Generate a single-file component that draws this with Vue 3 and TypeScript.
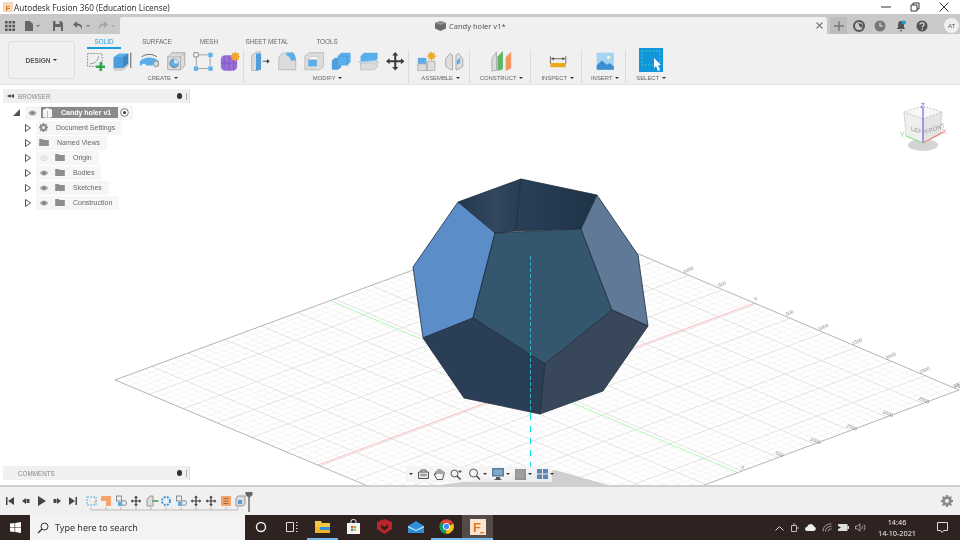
<script setup lang="ts">
type Pt = [number, number];

// corners of the ground plane as seen on screen
const L: Pt = [115, 380];
const B: Pt = [554, 218];
const R: Pt = [959, 390];
const F: Pt = [525, 552];

function at(u: number, v: number): Pt {
  const a = (1 - u) * (1 - v);
  const b = u * (1 - v);
  const c = u * v;
  const d = (1 - u) * v;
  return [a * L[0] + b * B[0] + c * R[0] + d * F[0], a * L[1] + b * B[1] + c * R[1] + d * F[1]];
}

function seg(x1: Pt, x2: Pt) {
  return { x1: x1[0], y1: x1[1], x2: x2[0], y2: x2[1] };
}

const minor: ReturnType<typeof seg>[] = [];
const major: ReturnType<typeof seg>[] = [];
for (let i = 1; i < 60; i++) {
  const t = i / 60;
  const list = i % 5 === 0 ? major : minor;
  list.push(seg(at(t, 0), at(t, 1)));
  list.push(seg(at(0, t), at(1, t)));
}
const greenAxis = seg(at(0.49, 0), at(0.49, 1));
const redAxis = seg(at(0, 0.495), at(1, 0.495));

const rightLabels = ["1000", "500", "0", "500", "1000", "1500", "2000", "2500", "3000"].map((text, i) => {
  const p = at(1, (i + 4) / 12);
  return { text, x: p[0], y: p[1] - 4, key: "r" + i };
});
const frontLabels = ["0", "-500", "-1000", "-1500", "-2000", "-2500", "-3000"].map((text, i) => {
  const p = at((i + 6) / 12, 1);
  return { text, x: p[0], y: p[1] - 2, key: "f" + i };
});

const outline = [L, B, R, F].map((p) => p.join(",")).join(" ");

const faces = [
  { key: "innerL", fill: "url(#innerL)", pts: "458,202 521,179 516,231 495,233" },
  { key: "innerR", fill: "url(#innerR)", pts: "521,179 597,195 581,229 516,231" },
  { key: "left", fill: "#5b8ec8", pts: "458,202 495,233 473,318 423,338 413,267" },
  { key: "center", fill: "#35566f", pts: "495,233 581,229 612,310 545,364 473,318" },
  { key: "right", fill: "#5f7997", pts: "597,195 638,255 648,326 612,310 581,229" },
  { key: "botL", fill: "#2a3f56", pts: "423,338 473,318 545,364 540,414 464,398" },
  { key: "botR", fill: "#39475b", pts: "545,364 612,310 648,326 603,391 540,414" },
];

const tree = [
  { name: "Document Settings", kind: "gear" },
  { name: "Named Views", kind: "plain" },
  { name: "Origin", kind: "off" },
  { name: "Bodies", kind: "on" },
  { name: "Sketches", kind: "on" },
  { name: "Construction", kind: "on" },
];
</script>

<template>
  <div class="screen">
    <svg class="defs" width="0" height="0">
      <symbol id="eye" viewBox="0 0 12 8">
        <path d="M.5 4C2 1.5 4 .6 6 .6s4 .9 5.500 3.400C10 6.500 8 7.400 6 7.400S2 6.500.5 4z" fill="#a8a8a8" />
        <circle cx="6" cy="4" r="2" fill="#7c7c7c" />
      </symbol>
      <symbol id="eyeoff" viewBox="0 0 12 8">
        <path d="M.5 4C2 1.500 4 .6 6 .6s4 .9 5.500 3.400C10 6.500 8 7.400 6 7.400S2 6.500.5 4z" fill="#f2f2f2" stroke="#c8c8c8" stroke-width=".8" />
        <circle cx="6" cy="4" r="1.700" fill="#dcdcdc" />
      </symbol>
      <symbol id="folder" viewBox="0 0 11 8">
        <path d="M0 0h4l1 1h6v7H0z" fill="#8e8e8e" />
      </symbol>
      <symbol id="move" viewBox="0 0 20 20">
        <path d="M10 1l3 3.500h-2V9h4.500V7l3.500 3-3.500 3v-2H11v4.500h2L10 19l-3-3.500h2V11H4.500v2L1 10l3.500-3v2H9V4.500H7z" fill="#3a3a3a" />
      </symbol>
      <symbol id="gear" viewBox="0 0 12 12">
        <path d="M5 0h2l.3 1.600 1.200.5L9.900 1.200l1.100 1-1 1.300.6 1.300L12 5v2l-1.400.3-.6 1.200 1 1.400-1.100 1.100-1.400-1-1.200.6L7 12H5l-.3-1.400-1.200-.6-1.400 1L1 9.900l1-1.400-.6-1.200L0 7V5l1.400-.2L2 3.500l-1-1.300 1.100-1 1.400.9 1.200-.5z" fill="#8a8a8a" />
        <circle cx="6" cy="6" r="2" fill="#f0f0f0" />
      </symbol>
    </svg>

    <header class="title-bar">
      <svg width="10" height="10" viewBox="0 0 10 10" class="app-logo">
        <rect width="10" height="10" rx="1" fill="#f6d9bd" />
        <text x="2.500" y="8.500" class="logo-f">F</text>
      </svg>
      <span class="title-text">Autodesk Fusion 360 (Education License)</span>
      <div class="win-buttons">
        <svg width="10" height="10" viewBox="0 0 10 10"><path d="M0 5h10" stroke="#333" /></svg>
        <svg width="10" height="10" viewBox="0 0 10 10" fill="none" stroke="#333"><path d="M1 3h6v6H1zM3 3V1h6v6H7" /></svg>
        <svg width="10" height="10" viewBox="0 0 10 10"><path d="M.5.500l9 9M9.500.500l-9 9" stroke="#333" /></svg>
      </div>
    </header>

    <div class="tab-bar">
      <div class="quick">
        <svg width="10" height="10" viewBox="0 0 10 10" fill="#555" class="q-grid">
          <path d="M0 0h2.600v2.600H0zM3.700 0h2.600v2.600H3.700zM7.400 0H10v2.600H7.400zM0 3.700h2.600v2.600H0zM3.700 3.700h2.600v2.600H3.700zM7.400 3.700H10v2.600H7.400zM0 7.400h2.600V10H0zM3.700 7.400h2.600V10H3.700zM7.400 7.400H10V10H7.400z" />
        </svg>
        <svg width="8" height="10" viewBox="0 0 8 10" class="q-file"><path d="M0 0h5l3 3v7H0z" fill="#666" /></svg>
        <span class="caret q-caret"></span>
        <svg width="10" height="10" viewBox="0 0 10 10" class="q-save">
          <path d="M0 0h8l2 2v8H0z" fill="#666" /><path d="M2.500 0h4v3h-4zM2 6h6v4H2z" fill="#c9c9c9" />
        </svg>
        <svg width="10" height="9" viewBox="0 0 10 9" class="q-undo">
          <path d="M4 0L0 3.500 4 7V4.500c3 0 4 1.500 4.500 4C10 5 8 2.500 4 2.500z" fill="#666" />
        </svg>
        <span class="caret q-caret"></span>
        <svg width="10" height="9" viewBox="0 0 10 9" class="q-redo">
          <path d="M6 0l4 3.500L6 7V4.500c-3 0-4 1.500-4.500 4C0 5 2 2.500 6 2.500z" fill="#a5a5a5" />
        </svg>
        <span class="caret q-caret light"></span>
      </div>
      <div class="doc-tab">
        <svg width="11" height="10" viewBox="0 0 11 10" class="doc-icon">
          <path d="M0 2l5.500-2L11 2v5.500L5.500 10 0 7.500z" fill="#6c6c6c" /><path d="M0 2l5.500 2L11 2 5.500 0z" fill="#909090" />
        </svg>
        <span class="doc-name">Candy holer v1*</span>
        <svg width="7" height="7" viewBox="0 0 7 7" class="doc-close"><path d="M.5.500l6 6M6.500.500l-6 6" stroke="#777" stroke-width="1.100" /></svg>
      </div>
      <div class="add-tab">
        <svg width="10" height="10" viewBox="0 0 10 10"><path d="M5 0v10M0 5h10" stroke="#777" stroke-width="1.400" /></svg>
      </div>
      <div class="status-icons">
        <svg width="12" height="12" viewBox="0 0 12 12">
          <circle cx="6" cy="6" r="5" fill="none" stroke="#555" stroke-width="2" /><path d="M5 3l4 1 1 4-3-1z" fill="#555" />
        </svg>
        <svg width="12" height="12" viewBox="0 0 12 12">
          <circle cx="6" cy="6" r="5.500" fill="#777" /><path d="M6 2.500V6h3" fill="none" stroke="#ddd" stroke-width="1.100" />
        </svg>
        <svg width="12" height="12" viewBox="0 0 12 12">
          <path d="M6 1c2 0 3 1.500 3 4v2.500l1.500 1.500h-9L3 7.500V5c0-2.500 1-4 3-4zM4.800 10h2.400L6 12z" fill="#555" />
          <circle cx="9" cy="2.500" r="2" fill="#1b9be0" />
        </svg>
        <svg width="12" height="12" viewBox="0 0 12 12">
          <circle cx="6" cy="6" r="5.500" fill="#555" />
          <path d="M4 4.500C4 3.300 5 2.800 6 2.800s2 .6 2 1.700C8 6 6.300 6 6.300 7.500" fill="none" stroke="#ddd" stroke-width="1.200" />
          <circle cx="6.300" cy="9.300" r=".8" fill="#ddd" />
        </svg>
        <span class="avatar">AT</span>
      </div>
    </div>

    <section class="ribbon">
      <div class="design-btn">DESIGN <span class="caret dark"></span></div>
      <div class="ribbon-main">
        <nav class="tabs">
          <span class="tab active">SOLID</span>
          <span class="tab surface">SURFACE</span>
          <span class="tab">MESH</span>
          <span class="tab">SHEET METAL</span>
          <span class="tab">TOOLS</span>
        </nav>
        <div class="groups">
          <div class="group g-create">
            <div class="icons">
              <svg class="ri" viewBox="0 0 24 24">
                <path d="M3 3h17v15H3z" fill="none" stroke="#555" stroke-dasharray="2 1.500" stroke-width=".8" />
                <path d="M6 15c6 0 9-4 10-9" fill="none" stroke="#888" />
                <path d="M17 13h3v4h4v3h-4v4h-3v-4h-4v-3h4z" fill="#2aa84a" />
              </svg>
              <svg class="ri" viewBox="0 0 24 24">
                <path d="M2 7l6-4h11v13l-6 5H2z" fill="#5aaeea" /><path d="M2 7h11v14H2z" fill="#4f9ddb" /><path d="M13 7l6-4v13l-6 5z" fill="#3d86c4" />
                <path d="M2 20h11l6-5v3l-6 5H2z" fill="#cfcfcf" /><path d="M22 2v18" stroke="#444" />
              </svg>
              <svg class="ri" viewBox="0 0 24 24">
                <path d="M1 12C5 6 19 6 23 12v6c-3-4-7-4-7-1H8c0-3-4-3-7 1z" fill="#5aaeea" />
                <path d="M3 7c5-4 13-4 18 0" fill="none" stroke="#555" /><ellipse cx="20" cy="15" rx="3" ry="3.500" fill="#d8d8d8" stroke="#888" />
              </svg>
              <svg class="ri" viewBox="0 0 24 24">
                <path d="M2 7l5-5h15v15l-5 5H2z" fill="#dcdcdc" stroke="#888" stroke-width=".7" /><path d="M2 7h15v15M17 7l5-5" fill="none" stroke="#999" stroke-width=".7" />
                <circle cx="9.500" cy="14.500" r="5" fill="#5aaeea" stroke="#777" /><path d="M9.500 9.500a5 5 0 0 1 5 5h-5z" fill="#cfe3f3" />
              </svg>
              <svg class="ri" viewBox="0 0 24 24">
                <path d="M6 4.500h12M4 7v11M20 7v11M6 20.500h12" stroke="#999" />
                <path d="M1 2h5v5H1z" fill="#fff" stroke="#777" /><path d="M18 2h5v5h-5zM1 18h5v5H1zM18 18h5v5h-5z" fill="#5aaeea" />
              </svg>
              <svg class="ri" viewBox="0 0 24 24">
                <rect x="1" y="5" width="19" height="18" rx="5" fill="#9a6fd8" />
                <path d="M1 14h19M10.500 5v18M5 6v16M16 6v16" stroke="#7a4fc0" stroke-width=".7" />
                <path d="M18 0l1.400 3 3-1-1 3 2.600 1.500L21.400 8l1 3-3-1L18 12.500 16.600 10l-3 1 1-3L12 6.500 14.600 5l-1-3 3 1z" fill="#f5a623" />
              </svg>
            </div>
            <span class="g-label">CREATE <i class="caret dark"></i></span>
          </div>
          <div class="group g-modify">
            <div class="icons">
              <svg class="ri" viewBox="0 0 24 24">
                <path d="M2 5l6-4h4v20l-4 2H2z" fill="#dcdcdc" stroke="#888" stroke-width=".6" /><path d="M7 3h6v19l-6 1z" fill="#4f9ddb" />
                <path d="M15 12h6" stroke="#333" /><path d="M20 9.500l3 2.500-3 2.500z" fill="#333" />
              </svg>
              <svg class="ri" viewBox="0 0 24 24">
                <path d="M2 9Q3 2 12 2h7l3 8v12H2z" fill="#dcdcdc" stroke="#999" stroke-width=".6" /><path d="M11 2h8q3 3 3 9h-6q0-4-5-6z" fill="#5aaeea" />
              </svg>
              <svg class="ri" viewBox="0 0 24 24">
                <path d="M1 6l5-4h17v16l-5 4H1z" fill="#dcdcdc" stroke="#999" stroke-width=".6" /><path d="M5 10h10v8H5z" fill="#5aaeea" /><path d="M5 10l3-3h10l-3 3z" fill="#fff" stroke="#999" stroke-width=".4" />
              </svg>
              <svg class="ri" viewBox="0 0 24 24">
                <path d="M1 11l4-3h7v11l-4 3H1z" fill="#4f9ddb" /><path d="M8 6l4-4h11v11l-4 4H8z" fill="#5aaeea" /><path d="M8 6h11v11" fill="none" stroke="#3d86c4" stroke-width=".6" />
              </svg>
              <svg class="ri" viewBox="0 0 24 24">
                <path d="M3 6l4-4h16v7l-4 3H3z" fill="#5aaeea" />
                <path d="M1 13l21-2" stroke="#8ec9f0" stroke-width="1.400" />
                <path d="M3 14h16l4-3v7l-4 4H3z" fill="#dcdcdc" stroke="#999" stroke-width=".5" />
              </svg>
              <svg class="ri" viewBox="0 0 20 20"><use href="#move" /></svg>
            </div>
            <span class="g-label">MODIFY <i class="caret dark"></i></span>
          </div>
          <div class="group g-assemble">
            <div class="icons wide">
              <svg class="ri" viewBox="0 0 24 24">
                <path d="M1 8h10v7H1z" fill="#5aaeea" /><path d="M1 15h10v8H1zM12 12h9v11h-9z" fill="#dcdcdc" stroke="#888" stroke-width=".6" />
                <path d="M17 0l1.200 2.700 2.800-1-1 2.800 3 1.500-3 1.400 1 2.800-2.800-1L17 12l-1.300-2.800-2.700 1 1-2.800-3-1.400 3-1.500-1-2.800 2.700 1z" fill="#f5a623" />
              </svg>
              <svg class="ri" viewBox="0 0 24 24">
                <path d="M2 9l5-6 3 2v17l-4-1-4-3z" fill="#dedede" stroke="#888" stroke-width=".7" />
                <path d="M22 9l-5-6-3 2v17l4-1 4-3z" fill="#dedede" stroke="#888" stroke-width=".7" />
                <path d="M15 11l4-3v6l-4 2z" fill="#5aaeea" />
              </svg>
            </div>
            <span class="g-label">ASSEMBLE <i class="caret dark"></i></span>
          </div>
          <div class="group g-construct">
            <div class="icons">
              <svg class="ri big" viewBox="0 0 24 24">
                <path d="M1 9l5-7v20l-5 1z" fill="#dcdcdc" stroke="#888" stroke-width=".6" />
                <path d="M7 7l6-6v20l-6 2z" fill="#5cb868" />
                <path d="M16 8l6-6v18l-6 3z" fill="#ef9860" />
              </svg>
            </div>
            <span class="g-label">CONSTRUCT <i class="caret dark"></i></span>
          </div>
          <div class="group g-inspect">
            <div class="icons">
              <svg class="ri" viewBox="0 0 24 24">
                <path d="M4 6v9M22 6v9" stroke="#555" /><path d="M5 9h16" stroke="#555" /><path d="M5 9l3-2v4zM21 9l-3-2v4z" fill="#555" />
                <path d="M4 14h18v5H4z" fill="#eda91c" />
              </svg>
            </div>
            <span class="g-label">INSPECT <i class="caret dark"></i></span>
          </div>
          <div class="group g-insert">
            <div class="icons">
              <svg class="ri" viewBox="0 0 24 24">
                <rect x="2" y="2" width="20" height="20" fill="#a8d4f2" />
                <circle cx="16" cy="7.500" r="2" fill="#fff5c9" />
                <path d="M2 17l6-6 6 5 3-2 5 4v4H2z" fill="#3d8ed0" />
              </svg>
            </div>
            <span class="g-label">INSERT <i class="caret dark"></i></span>
          </div>
          <div class="group g-select">
            <div class="select-btn">
              <svg width="24" height="24" viewBox="0 0 24 24">
                <path d="M3 3h18v14H3z" fill="none" stroke="#5ed2a8" stroke-width=".8" stroke-dasharray="2 1.500" />
                <path d="M15 10l7 7h-3l2 5-2 1-2-5-2 2z" fill="#fff" />
              </svg>
            </div>
            <span class="g-label">SELECT <i class="caret dark"></i></span>
          </div>
        </div>
      </div>
    </section>

    <main class="viewport">
      <svg class="canvas" width="960" height="400" viewBox="0 85 960 400">
        <defs>
          <linearGradient id="innerL" x1="0" y1="0" x2="1" y2="0">
            <stop offset="0" stop-color="#22384c" /><stop offset=".6" stop-color="#33475f" /><stop offset="1" stop-color="#283c52" />
          </linearGradient>
          <linearGradient id="innerR" x1="0" y1="0" x2="1" y2="0">
            <stop offset="0" stop-color="#2a4058" /><stop offset="1" stop-color="#1f3346" />
          </linearGradient>
        </defs>
        <line v-for="(l, i) in minor" :key="'n' + i" v-bind="l" class="g-minor" />
        <line v-for="(l, i) in major" :key="'m' + i" v-bind="l" class="g-major" />
        <line v-bind="greenAxis" class="g-green" />
        <line v-bind="redAxis" class="g-red" />
        <polygon :points="outline" class="g-border" />
        <text
          v-for="t in rightLabels"
          :key="t.key"
          :x="t.x"
          :y="t.y"
          :transform="`rotate(-24 ${t.x} ${t.y})`"
          class="g-label-text"
        >{{ t.text }}</text>
        <text
          v-for="t in frontLabels"
          :key="t.key"
          :x="t.x"
          :y="t.y"
          :transform="`rotate(22 ${t.x} ${t.y})`"
          class="g-label-text"
        >{{ t.text }}</text>
        <polygon points="440,485 555,470 608,485" fill="#cfcfcf" />
        <polygon v-for="f in faces" :key="f.key" :points="f.pts" :fill="f.fill" class="face" />
        <line x1="530.500" y1="256" x2="530.500" y2="414" class="axis-on" />
        <line x1="530.500" y1="414" x2="530.500" y2="485" class="axis-off" />
      </svg>

      <svg class="viewcube" width="60" height="60" viewBox="0 0 60 60">
        <ellipse cx="28" cy="46" rx="15" ry="6" fill="#d4d4d4" />
        <path d="M9 13l19 7v24L11 37z" fill="#efefef" />
        <path d="M47 13l-19 7v24l17-7z" fill="#e4e4e4" />
        <path d="M28 7l19 6-19 7-19-7z" fill="#f8f8f8" stroke="#aaa" stroke-width=".7" stroke-dasharray="2 1.500" />
        <path d="M9 13l2 24M47 13l-2 24" stroke="#c8c8c8" stroke-width=".7" fill="none" />
        <text x="12" y="21" transform="matrix(1 .3 0 1 4 7)" class="cube-text">LEFT</text>
        <text x="31" y="35" transform="rotate(-20 31 35)" class="cube-text">FRONT</text>
        <path d="M28 44V9" stroke="#5a5ae6" stroke-width="1.100" />
        <path d="M28 44l-17-7" stroke="#8fdc8f" stroke-width="1.100" />
        <path d="M28 44l20-11" stroke="#ea7f7f" stroke-width="1.100" />
        <text x="25.500" y="9" class="axis-z">Z</text>
        <text x="5" y="38" class="axis-y">Y</text>
        <text x="47" y="35" class="axis-x">X</text>
      </svg>

      <aside class="panel browser">
        <div class="panel-head">
          <svg width="7" height="4" viewBox="0 0 7 4" class="collapse"><path d="M3.500 0v4L0 2zM7 0v4L3.500 2z" fill="#444" /></svg>
          <span class="panel-title">BROWSER</span>
          <span class="panel-dot"></span>
          <span class="panel-grip"></span>
        </div>
        <div class="tree">
          <div class="root-row">
            <svg width="7" height="7" viewBox="0 0 7 7" class="root-arrow"><path d="M7 0v7H0z" fill="#555" /></svg>
            <div class="chip root-chip">
              <svg width="9" height="6" class="eye"><use href="#eye" /></svg>
              <div class="root-name">
                <svg width="9" height="10" viewBox="0 0 9 10"><path d="M0 2l4-2 5 1.500V9L4.500 10 0 9z" fill="#f6f6f6" /><path d="M4.500 3v7" stroke="#bbb" /></svg>
                <span>Candy holer v1</span>
              </div>
              <svg width="9" height="9" viewBox="0 0 9 9" class="radio">
                <circle cx="4.500" cy="4.500" r="3.800" fill="#fff" stroke="#555" stroke-width=".8" /><circle cx="4.500" cy="4.500" r="1.500" fill="#333" />
              </svg>
            </div>
          </div>
          <div v-for="row in tree" :key="row.name" class="tree-row">
            <svg width="6" height="8" viewBox="0 0 6 8" class="expand"><path d="M.5.500L5.500 4 .5 7.500z" fill="#fff" stroke="#555" /></svg>
            <div class="chip">
              <svg v-if="row.kind === 'gear'" width="9" height="9" class="t-icon"><use href="#gear" /></svg>
              <svg v-else-if="row.kind === 'plain'" width="10" height="7" class="t-icon"><use href="#folder" /></svg>
              <template v-else>
                <svg width="10" height="6" class="t-icon t-eye"><use :href="row.kind === 'off' ? '#eyeoff' : '#eye'" /></svg>
                <svg width="10" height="7" class="t-folder"><use href="#folder" /></svg>
              </template>
              <span class="t-name" :class="{ 'with-eye': row.kind === 'off' || row.kind === 'on' }">{{ row.name }}</span>
            </div>
          </div>
        </div>
      </aside>

      <aside class="panel comments">
        <div class="panel-head">
          <span class="panel-title indent">COMMENTS</span>
          <span class="panel-dot"></span>
          <span class="panel-grip"></span>
        </div>
      </aside>

      <div class="nav-bar">
        <svg width="12" height="12" viewBox="0 0 20 20"><use href="#move" /></svg>
        <span class="caret dark"></span>
        <svg width="11" height="10" viewBox="0 0 11 10" class="nb">
          <path d="M.5 3h10v6.500H.5z" fill="#ddd" stroke="#555" /><path d="M3 3V1h5v2M2.500 6h6" stroke="#555" fill="none" />
        </svg>
        <svg width="11" height="12" viewBox="0 0 11 12" class="nb">
          <path d="M2 6V3.500M4 5.500V1.500M6 5.500V1.500M8 6V2.500M2 6L1 5 .5 7l2.500 4.500h5.500L10 6V4" fill="none" stroke="#555" stroke-linecap="round" />
        </svg>
        <svg width="12" height="11" viewBox="0 0 12 11" class="nb">
          <circle cx="4.500" cy="4.500" r="3.500" fill="#eef4f8" stroke="#555" /><path d="M7 7l3.500 3.500" stroke="#444" stroke-width="1.400" /><path d="M10 1v3M8.500 2.500h3" stroke="#555" />
        </svg>
        <svg width="13" height="12" viewBox="0 0 13 12" class="nb wide-nb">
          <circle cx="5.500" cy="5" r="4" fill="#eef4f8" stroke="#555" /><path d="M8.500 8l3.500 3.500" stroke="#444" stroke-width="1.400" />
        </svg>
        <span class="caret dark"></span>
        <svg width="12" height="12" viewBox="0 0 12 12" class="nb">
          <path d="M0 0h12v8.500H0z" fill="#5a7e9e" /><path d="M1.500 1.500h9v5.500h-9z" fill="#7fa8cc" /><path d="M4 9h4v2H4z" fill="#555" /><path d="M2.500 11h7v1h-7z" fill="#555" />
        </svg>
        <span class="caret dark"></span>
        <svg width="11" height="11" viewBox="0 0 11 11" class="nb">
          <path d="M0 0h11v11H0z" fill="#8a8a8a" /><path d="M2 0v11M4 0v11M6 0v11M8 0v11M0 2h11M0 4h11M0 6h11M0 8h11" stroke="#bbb" stroke-width=".5" />
        </svg>
        <span class="caret dark"></span>
        <svg width="11" height="10" viewBox="0 0 11 10" class="nb">
          <path d="M0 0h11v10H0z" fill="#5f87b5" /><path d="M5.500 0v10M0 5h11" stroke="#e8e8e8" />
        </svg>
        <span class="caret dark"></span>
      </div>
    </main>

    <section class="timeline">
      <div class="controls">
        <svg width="10" height="10" viewBox="0 0 10 10"><path d="M1 1h1.500v8H1zM9 1v8L3 5z" fill="#444" /></svg>
        <svg width="10" height="10" viewBox="0 0 10 10"><path d="M5 2v6L1 5zM5.500 3h3v4h-3z" fill="#444" /></svg>
        <svg width="10" height="10" viewBox="0 0 10 10"><path d="M2 0l8 5-8 5z" fill="#444" /></svg>
        <svg width="10" height="10" viewBox="0 0 10 10"><path d="M5 2v6l4-3zM4.500 3h-3v4h3z" fill="#444" /></svg>
        <svg width="10" height="10" viewBox="0 0 10 10"><path d="M9 1H7.500v8H9zM1 1v8l6-4z" fill="#444" /></svg>
      </div>
      <svg class="strip" width="172" height="26" viewBox="88 488 172 26">
        <path d="M96 506v3h147v-3M111 506v3M126 506v3M141 506v3M156 506v3M171 506v3M186 506v3M201 506v3M216 506v3M231 506v3" fill="none" stroke="#bbb" />
        <path d="M92 496h9v8h-9z" fill="none" stroke="#5aaeea" stroke-dasharray="2 1" />
        <path d="M99 502l3-3" stroke="#ef9860" />
        <path d="M106 495h10v10h-5v-5h-5z" fill="#f5a56b" />
        <g fill="#e8eef4" stroke="#777" stroke-width=".8">
          <rect x="121.500" y="495" width="5" height="5" /><circle cx="129" cy="502" r="2.500" />
          <rect x="181.500" y="495" width="5" height="5" /><circle cx="189" cy="502" r="2.500" />
        </g>
        <rect x="123" y="501" width="4" height="4" fill="#5aaeea" /><rect x="183" y="501" width="4" height="4" fill="#5aaeea" />
        <use href="#move" x="135" y="494" width="12" height="12" />
        <use href="#move" x="195" y="494" width="12" height="12" />
        <use href="#move" x="210" y="494" width="12" height="12" />
        <path d="M152 498l3-3h3v10h-6zM159 500h5" fill="#dcdcdc" stroke="#777" stroke-width=".7" />
        <path d="M157 500h6" stroke="#2aa84a" stroke-width="1.200" />
        <circle cx="171" cy="500" r="4" fill="none" stroke="#3d9be0" stroke-width="2" stroke-dasharray="2 1.200" />
        <path d="M226 495h10v10h-10z" fill="#f5a56b" /><path d="M228.500 497.500h5M228.500 500h5M228.500 502.500h5" stroke="#a86a3a" />
        <path d="M241 497l2-2h7v8l-2 2h-7z" fill="#dcdcdc" stroke="#777" stroke-width=".7" /><path d="M243 499h4v4h-4z" fill="#4f9ddb" />
        <path d="M250.500 491h7v3l-3.500 3-3.500-3z" fill="#666" /><path d="M254 495v16" stroke="#777" stroke-width="1.600" />
      </svg>
      <svg width="12" height="12" class="t-gear"><use href="#gear" /></svg>
    </section>

    <footer class="taskbar">
      <div class="start">
        <svg width="11" height="11" viewBox="0 0 11 11" fill="#fff">
          <path d="M0 1.600L4.600 1v4.200H0zM5.200.9L11 0v5.200H5.200zM0 5.800h4.600V10L0 9.400zM5.200 5.800H11V11l-5.800-.9z" />
        </svg>
      </div>
      <div class="search">
        <svg width="12" height="12" viewBox="0 0 12 12" fill="none" stroke="#333">
          <circle cx="7.500" cy="4.500" r="3.500" /><path d="M5 7l-4 4" stroke-width="1.200" />
        </svg>
        <span>Type here to search</span>
      </div>
      <div class="task-btn">
        <svg width="12" height="12" viewBox="0 0 12 12"><circle cx="6" cy="6" r="4.500" fill="none" stroke="#eee" stroke-width="1.400" /></svg>
      </div>
      <div class="task-btn">
        <svg width="12" height="10" viewBox="0 0 12 10" fill="none" stroke="#ddd"><path d="M.5.500h7v9h-7zM10 .5h1.500M10 3.500h1.500M10 6.500h1.500M10 9.500h1.500" /></svg>
      </div>
      <div class="task-btn running">
        <svg width="15" height="13" viewBox="0 0 15 13"><path d="M0 1h6l1 2h8v10H0z" fill="#f5c644" /><path d="M0 7h15v6H0z" fill="#f0b429" /><path d="M5 7h10v3H5z" fill="#2f8fd8" /></svg>
      </div>
      <div class="task-btn">
        <svg width="15" height="15" viewBox="0 0 15 15">
          <path d="M1 4h13v11H1z" fill="#f4f4f4" /><path d="M5 4V2q0-1.500 2.500-1.500T10 2v2" fill="none" stroke="#eee" />
          <path d="M5 7h2.300v2.300H5z" fill="#e8562a" /><path d="M7.800 7h2.300v2.300H7.800z" fill="#7db93d" /><path d="M5 9.800h2.300v2.300H5z" fill="#2c9be0" /><path d="M7.800 9.800h2.300v2.300H7.800z" fill="#f5b71f" />
        </svg>
      </div>
      <div class="task-btn">
        <svg width="15" height="15" viewBox="0 0 15 15"><path d="M7.500 0L15 3v7l-7.500 5L0 10V3zM4 5.500V9l3.500 2.500L11 9V5.500L7.500 8z" fill="#b8262b" fill-rule="evenodd" /></svg>
      </div>
      <div class="task-btn">
        <svg width="16" height="12" viewBox="0 0 16 12"><path d="M0 5l8-5 8 5v7H0z" fill="#2a8fdc" /><path d="M0 5l8 4 8-4v1.200L8 10 0 6.200z" fill="#e8f4fc" /></svg>
      </div>
      <div class="task-btn running">
        <svg width="15" height="15" viewBox="0 0 15 15">
          <path d="M7.500 7.500L1.200 4A7.300 7.300 0 0 1 14.400 4.800H7.500z" fill="#db4437" />
          <path d="M7.500 7.500L1.200 4A7.300 7.300 0 0 0 7 14.800z" fill="#0f9d58" />
          <path d="M7.500 7.500L7 14.800A7.300 7.300 0 0 0 14.400 4.800z" fill="#f4c20d" />
          <circle cx="7.500" cy="7.500" r="3.600" fill="#fff" /><circle cx="7.500" cy="7.500" r="2.700" fill="#4285f4" />
        </svg>
      </div>
      <div class="task-btn running active">
        <svg width="16" height="16" viewBox="0 0 16 16">
          <rect width="16" height="16" fill="#fbe4cd" /><text x="3" y="13" class="task-f">F</text><path d="M10 13h4v1.500h-4z" fill="#e8833a" />
        </svg>
      </div>
      <div class="tray">
        <svg width="9" height="6" viewBox="0 0 9 6" fill="none" stroke="#ddd"><path d="M.5 5.500l4-4 4 4" /></svg>
        <svg width="9" height="10" viewBox="0 0 9 10" fill="none" stroke="#bbb"><path d="M1.500 2.500h5v6h-5zM3 1h2M6.500 5H9" /></svg>
        <svg width="11" height="7" viewBox="0 0 11 7"><path d="M2 7a2 2 0 0 1 0-4q1-3 4-3 2.500 0 3 2.500A2.300 2.300 0 0 1 9 7z" fill="#eee" /></svg>
        <svg width="10" height="9" viewBox="0 0 10 9" fill="none" stroke="#aaa" stroke-width=".9"><path d="M1 8.500Q1 1 9.500.8M3.500 8.500q0-5 6-5.200M6 8.500Q6 6 9.500 5.800" /></svg>
        <svg width="11" height="7" viewBox="0 0 11 7"><path d="M0 0h9.500v7H0z" fill="#ddd" /><path d="M9.500 2H11v3H9.500z" fill="#ddd" /><path d="M0 2l3 1.500L0 5z" fill="#2e2320" /></svg>
        <svg width="11" height="9" viewBox="0 0 11 9" fill="none" stroke="#bbb" stroke-width=".8"><path d="M.5 3h2L5 .8v7.400L2.500 6h-2zM7 3q1 1.500 0 3M9 1.500q2 3 0 6" /></svg>
      </div>
      <div class="clock"><span>14:46</span><span>14-10-2021</span></div>
      <div class="notify">
        <svg width="11" height="11" viewBox="0 0 11 11" fill="none" stroke="#ddd"><path d="M.5.500h10v8H6.500L5 10.500 3.500 8.500h-3z" /></svg>
      </div>
    </footer>
  </div>
</template>

<style>
html,
body {
  margin: 0;
  background: #fff;
}
</style>

<style scoped>
.screen {
  width: 960px;
  height: 540px;
  display: flex;
  flex-direction: column;
  overflow: hidden;
  position: relative;
  background: #fff;
  color: #555;
  font-family: "Liberation Sans", Arial, sans-serif;
  filter: blur(0.35px);
}
.defs {
  position: absolute;
}
.caret {
  display: inline-block;
  width: 0;
  height: 0;
  border-left: 2px solid transparent;
  border-right: 2px solid transparent;
  border-top: 2.500px solid #777;
  vertical-align: middle;
}
.caret.dark {
  border-top-color: #333;
}
.caret.light {
  border-top-color: #aaa;
}

.title-bar {
  height: 14px;
  flex: none;
  display: flex;
  align-items: center;
  padding-left: 3px;
}
.app-logo {
  flex: none;
}
.logo-f {
  font: bold 8px "Liberation Sans", sans-serif;
  fill: #e07a1f;
}
.title-text {
  margin-left: 1px;
  font: 8.200px "Noto Sans", sans-serif;
  color: #333;
}
.win-buttons {
  margin-left: auto;
  display: flex;
  gap: 19px;
  padding-right: 11px;
}

.tab-bar {
  height: 20px;
  flex: none;
  background: #c9c9c9;
  display: flex;
  align-items: flex-end;
}
.quick {
  width: 120px;
  height: 17px;
  flex: none;
  display: flex;
  align-items: center;
  padding-left: 5px;
  box-sizing: border-box;
}
.q-file {
  margin-left: 10px;
}
.q-caret {
  margin-left: 3px;
}
.q-save {
  margin-left: 13px;
}
.q-undo {
  margin-left: 10px;
}
.q-redo {
  margin-left: 8px;
}
.doc-tab {
  width: 707px;
  height: 17px;
  flex: none;
  box-sizing: border-box;
  background: #f0f0f0;
  border-radius: 3px 3px 0 0;
  display: flex;
  align-items: center;
  padding-left: 315px;
  font: 7.500px "Noto Sans", sans-serif;
  color: #555;
}
.doc-name {
  margin-left: 3px;
}
.doc-close {
  margin-left: auto;
  margin-right: 4px;
}
.add-tab {
  margin-left: 3px;
  width: 17px;
  height: 17px;
  flex: none;
  background: #bcbcbc;
  display: flex;
  align-items: center;
  justify-content: center;
}
.status-icons {
  height: 17px;
  display: flex;
  align-items: center;
  gap: 9px;
  padding-left: 6px;
}
.avatar {
  margin-left: 7px;
  width: 15px;
  height: 15px;
  border-radius: 50%;
  background: #f0f0f0;
  font: 6px "Liberation Sans", sans-serif;
  color: #555;
  display: flex;
  align-items: center;
  justify-content: center;
}

.ribbon {
  height: 51px;
  flex: none;
  box-sizing: border-box;
  background: #f0f0f0;
  border-bottom: 1px solid #e2e2e2;
  display: flex;
}
.design-btn {
  width: 67px;
  height: 38px;
  margin: 7px 7px 0 8px;
  flex: none;
  box-sizing: border-box;
  border: 1px solid #dedede;
  border-radius: 3px;
  display: flex;
  align-items: center;
  justify-content: center;
  gap: 3px;
  font-size: 6.500px;
  font-weight: bold;
  color: #555;
}
.ribbon-main {
  flex: 1;
  display: flex;
  flex-direction: column;
}
.tabs {
  height: 15px;
  flex: none;
  display: grid;
  grid-template-columns: 34px 62px 52px 64px 56px;
  margin-left: 5px;
  box-sizing: border-box;
  padding-top: 3px;
}
.tab {
  font-size: 6.300px;
  line-height: 9px;
  text-align: center;
  color: #666;
}
.tab.active {
  color: #1b9be0;
  height: 12px;
  border-bottom: 2px solid #1b9be0;
  box-sizing: border-box;
}
.tab.surface {
  padding-left: 10px;
}
.groups {
  display: flex;
  height: 34px;
  padding-top: 1px;
  box-sizing: border-box;
}
.group {
  flex: none;
  display: flex;
  flex-direction: column;
  align-items: center;
  justify-content: space-between;
  box-sizing: border-box;
  border-right: 1px solid #dcdcdc;
  height: 33px;
  margin-right: 3px;
}
.g-create { width: 162px; }
.g-modify { width: 162px; }
.g-assemble { width: 58px; }
.g-construct { width: 58px; }
.g-inspect { width: 48px; }
.g-insert { width: 41px; }
.g-select { width: 44px; border-right: 0; }
.icons {
  display: flex;
  gap: 6.500px;
  height: 22px;
  align-items: center;
}
.icons.wide {
  gap: 7px;
}
.ri {
  width: 20.500px;
  height: 20.500px;
  flex: none;
}
.ri.big {
  width: 22px;
  height: 22px;
}
.g-label {
  font-size: 5.900px;
  line-height: 8px;
  color: #666;
  white-space: nowrap;
  padding-bottom: 1px;
}
.g-label .caret {
  margin-left: 1px;
}
.select-btn {
  width: 24px;
  height: 24px;
  margin-top: -2px;
  background: #0f96dc;
}

.viewport {
  flex: 1;
  position: relative;
  background: #fff;
  overflow: hidden;
}
.canvas {
  position: absolute;
  left: 0;
  top: 0;
}
.g-minor {
  stroke: #f1f1f1;
  stroke-width: 0.7;
}
.g-major {
  stroke: #dcdcdc;
  stroke-width: 0.8;
}
.g-green {
  stroke: #b6f4b6;
}
.g-red {
  stroke: #ffbcbc;
}
.g-border {
  fill: none;
  stroke: #b4b4b4;
}
.g-label-text {
  font-size: 4.800px;
  fill: #8a8a8a;
  text-anchor: middle;
}
.face {
  stroke: #1f2d3c;
  stroke-width: 0.8;
  stroke-linejoin: round;
}
.axis-on {
  stroke: #2cb3c4;
  stroke-dasharray: 4 2;
}
.axis-off {
  stroke: #00e6e6;
  stroke-dasharray: 6 6;
}
.viewcube {
  position: absolute;
  left: 895px;
  top: 14px;
}
.cube-text {
  font-size: 6px;
  fill: #999;
}
.axis-z {
  font-size: 7px;
  fill: #5a5ae6;
}
.axis-y {
  font-size: 7px;
  fill: #8fdc8f;
}
.axis-x {
  font-size: 7px;
  fill: #ea7f7f;
}

.panel {
  position: absolute;
  left: 3px;
  width: 187px;
}
.browser {
  top: 4px;
}
.comments {
  top: 381px;
}
.panel-head {
  height: 14px;
  background: #f0f0f0;
  display: flex;
  align-items: center;
  box-sizing: border-box;
  border-right: 1px solid #ddd;
  padding-left: 4px;
}
.collapse {
  margin-right: 4px;
}
.panel-title {
  font-size: 6.300px;
  color: #888;
}
.panel-title.indent {
  margin-left: 11px;
}
.panel-dot {
  margin-left: auto;
  width: 5.500px;
  height: 5.500px;
  border-radius: 50%;
  background: #333;
}
.panel-grip {
  width: 1px;
  height: 7px;
  background: #aaa;
  margin: 0 2px 0 4px;
}
.tree {
  padding-top: 2px;
}
.root-row,
.tree-row {
  height: 15px;
  display: flex;
  align-items: center;
}
.root-arrow {
  margin-left: 10px;
}
.root-chip {
  margin-left: 5px;
  height: 14px;
  padding: 0 4px 0 3px;
}
.chip {
  background: #f6f6f6;
  display: flex;
  align-items: center;
  height: 14px;
  position: relative;
}
.eye {
  width: 9px;
}
.root-name {
  margin-left: 4px;
  width: 77px;
  height: 11px;
  background: #8a8a8a;
  display: flex;
  align-items: center;
  padding-left: 2px;
  box-sizing: border-box;
  color: #fff;
  font-size: 7px;
  font-weight: bold;
}
.root-name span {
  margin-left: 9px;
  white-space: nowrap;
}
.radio {
  margin-left: 2px;
}
.expand {
  margin-left: 22px;
  flex: none;
}
.tree-row .chip {
  margin-left: 5px;
  padding: 0 7px 0 3px;
}
.t-icon {
  margin-left: 0;
  flex: none;
}
.t-folder {
  margin-left: 6px;
  flex: none;
}
.t-name {
  font-size: 7px;
  color: #666;
  margin-left: 8px;
  white-space: nowrap;
}
.t-name.with-eye {
  margin-left: 8px;
}

.nav-bar {
  position: absolute;
  left: 406px;
  top: 381px;
  height: 16px;
  width: 146px;
  box-sizing: border-box;
  background: rgba(243, 243, 243, 0.85);
  display: flex;
  align-items: center;
  padding-left: 1px;
  gap: 2px;
}
.nb {
  margin-left: 3px;
  flex: none;
}
.wide-nb {
  margin-left: 4px;
}

.timeline {
  height: 30px;
  flex: none;
  box-sizing: border-box;
  background: #f0f0f0;
  border-top: 2px solid #cfcfcf;
  display: flex;
  align-items: center;
}
.controls {
  display: flex;
  gap: 5.700px;
  margin-left: 5px;
}
.strip {
  margin-left: 5px;
  margin-top: 1px;
}
.t-gear {
  margin-left: auto;
  margin-right: 7px;
}

.taskbar {
  height: 25px;
  flex: none;
  background: #2e2320;
  display: flex;
  align-items: stretch;
  color: #eee;
}
.start {
  width: 30px;
  flex: none;
  display: flex;
  align-items: center;
  justify-content: center;
}
.search {
  width: 215px;
  flex: none;
  box-sizing: border-box;
  background: #f3f3f3;
  display: flex;
  align-items: center;
  padding-left: 7px;
  gap: 6px;
  font: 9px "Noto Sans", sans-serif;
  color: #333;
}
.task-btn {
  width: 31px;
  flex: none;
  display: flex;
  align-items: center;
  justify-content: center;
  box-sizing: border-box;
  border-bottom: 2px solid transparent;
}
.task-btn.running {
  border-bottom-color: #76b9ed;
}
.task-btn.active {
  background: #544a48;
}
.logo-f,
.task-f {
  font-family: "Liberation Sans", sans-serif;
}
.task-f {
  font-size: 13px;
  font-weight: bold;
  fill: #e07a1f;
}
.tray {
  margin-left: auto;
  display: flex;
  align-items: center;
  gap: 6px;
}
.clock {
  width: 50px;
  margin-left: 6px;
  display: flex;
  flex-direction: column;
  align-items: center;
  justify-content: center;
  font: 7.300px/11px "Noto Sans", sans-serif;
  color: #eee;
}
.notify {
  width: 35px;
  margin-left: 3px;
  display: flex;
  align-items: center;
  justify-content: center;
}
</style>
